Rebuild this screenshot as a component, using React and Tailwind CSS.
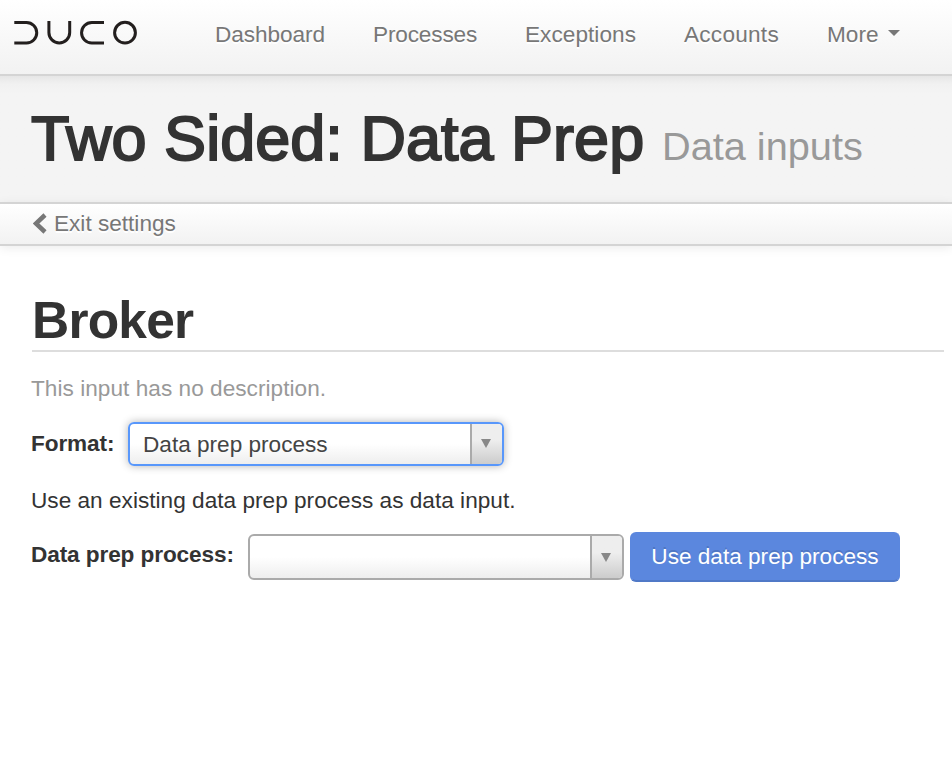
import React from 'react';

const navItems = [
  { label: 'Dashboard', className: 'w-[158px] tracking-[-0.05px]' },
  { label: 'Processes', className: 'w-[152px] tracking-[-0.15px]' },
  { label: 'Exceptions', className: 'w-[159px] tracking-[0.05px]' },
  { label: 'Accounts', className: 'w-[143px] tracking-[0.25px]' },
];

const Logo = () => (
  <svg width="124" height="26" viewBox="0 0 124 26" fill="none" stroke="#231f1e" strokeWidth="3">
    <path d="M0.3 2.5H12.5a10.25 10.25 0 0 1 0 20.5H0.3" />
    <path d="M34.9 1v11.5a10.4 10.4 0 0 0 20.8 0V1" />
    <path d="M90 2.5H77.8a10.25 10.25 0 0 0 0 20.5H90" />
    <circle cx="111" cy="12.7" r="10.4" />
  </svg>
);

const SelectBox = ({ value, focused }) => (
  <div
    className={`flex w-[376px] shrink-0 overflow-hidden rounded-md border-2 bg-linear-to-t from-[#eeeeee] to-white to-50% ${
      focused
        ? 'h-[44px] border-[#5897fb] shadow-[0_0_9px_rgba(0,0,0,0.3)]'
        : 'h-[46px] border-[#aaaaaa]'
    }`}
  >
    <span className="flex-1 pl-[13px] leading-[42px] text-[#444444]">{value}</span>
    <div className="flex w-[32px] justify-center border-l-2 border-[#aaaaaa] bg-linear-to-t from-[#cccccc] to-[#eeeeee] to-60%">
      <svg className={`mr-[2px] h-[9px] w-[10px] ${focused ? 'mt-[15px]' : 'mt-[17px]'}`} viewBox="0 0 10 9">
        <path d="M0 0h10L5 9z" fill="#888888" />
      </svg>
    </div>
  </div>
);

const Header = () => (
  <header className="flex h-[76px] border-b-2 border-[#d4d4d4] bg-linear-to-b from-white to-[#f2f2f2] pl-[14px] text-[#777777] [text-shadow:0_2px_0_#ffffff]">
    <a className="w-[201px] pt-5">
      <Logo />
    </a>
    <nav className="flex pt-[19px] leading-8">
      {navItems.map(item => (
        <a key={item.label} className={item.className}>{item.label}</a>
      ))}
      <a className="flex">
        <span className="w-[61px]">More</span>
        <span className="mt-[11px] h-0 w-0 border-x-[6px] border-t-[6px] border-x-transparent border-t-[#777777]" />
      </a>
    </nav>
  </header>
);

const App = () => {
  return (
    <div className="h-[768px] overflow-hidden bg-white font-['Liberation_Sans',Arial,sans-serif] text-[22.6px] whitespace-nowrap text-[#333333]">
      <Header />

      <div className="flex h-[126px] items-baseline bg-linear-to-b from-[#e6e6e6] via-[#f1f1f1] via-[8px] to-[#f4f4f4] to-[18px] pt-[24px] pl-[31px]">
        <h1 className="w-[631px] text-[63px] leading-[76px] tracking-[0.02px] [-webkit-text-stroke:2px_#333333]">
          Two Sided: Data Prep
        </h1>
        <small className="text-[39.7px] leading-none text-[#999999]">Data inputs</small>
      </div>

      <div className="flex h-[44px] border-y-2 border-[#d4d4d4] bg-linear-to-b from-white to-[#f2f2f2] pl-[33px] text-[#777777] shadow-[0_2px_10px_rgba(0,0,0,0.08)] [text-shadow:0_2px_0_#ffffff]">
        <svg className="mt-[9px] h-[21px] w-[14px]" viewBox="0 0 14 21" fill="none" stroke="#777777" strokeWidth="4.5">
          <path d="M12 2L3 10.5L12 19" />
        </svg>
        <a className="ml-[7px] leading-[40px]">Exit settings</a>
      </div>

      <main className="pt-[46px] pr-2 pl-[31px]">
        <h2 className="ml-px h-[60px] border-b-2 border-[#dddddd] text-[51.5px] leading-[57px] font-bold tracking-[-0.8px]">
          Broker
        </h2>
        <p className="mt-[21px] leading-8 tracking-[0.04px] text-[#999999]">This input has no description.</p>

        <div className="mt-[17px] flex">
          <label className="w-[97px] leading-[44px] font-bold tracking-[-0.1px]">Format:</label>
          <SelectBox value="Data prep process" focused />
        </div>

        <p className="mt-[19px] leading-8 tracking-[0.02px]">Use an existing data prep process as data input.</p>

        <div className="mt-[15px] flex items-center">
          <label className="w-[217px] pb-[4px] leading-[40px] font-bold tracking-[-0.1px]">Data prep process:</label>
          <SelectBox value="" />
          <button className="ml-[6px] h-[50px] w-[270px] rounded-md border-2 border-[#5b87de] border-b-[#5079c7] bg-[#5b87de] text-white [text-shadow:0_-2px_0_rgba(0,0,0,0.15)]">
            Use data prep process
          </button>
        </div>
      </main>
    </div>
  );
};

export default App;
